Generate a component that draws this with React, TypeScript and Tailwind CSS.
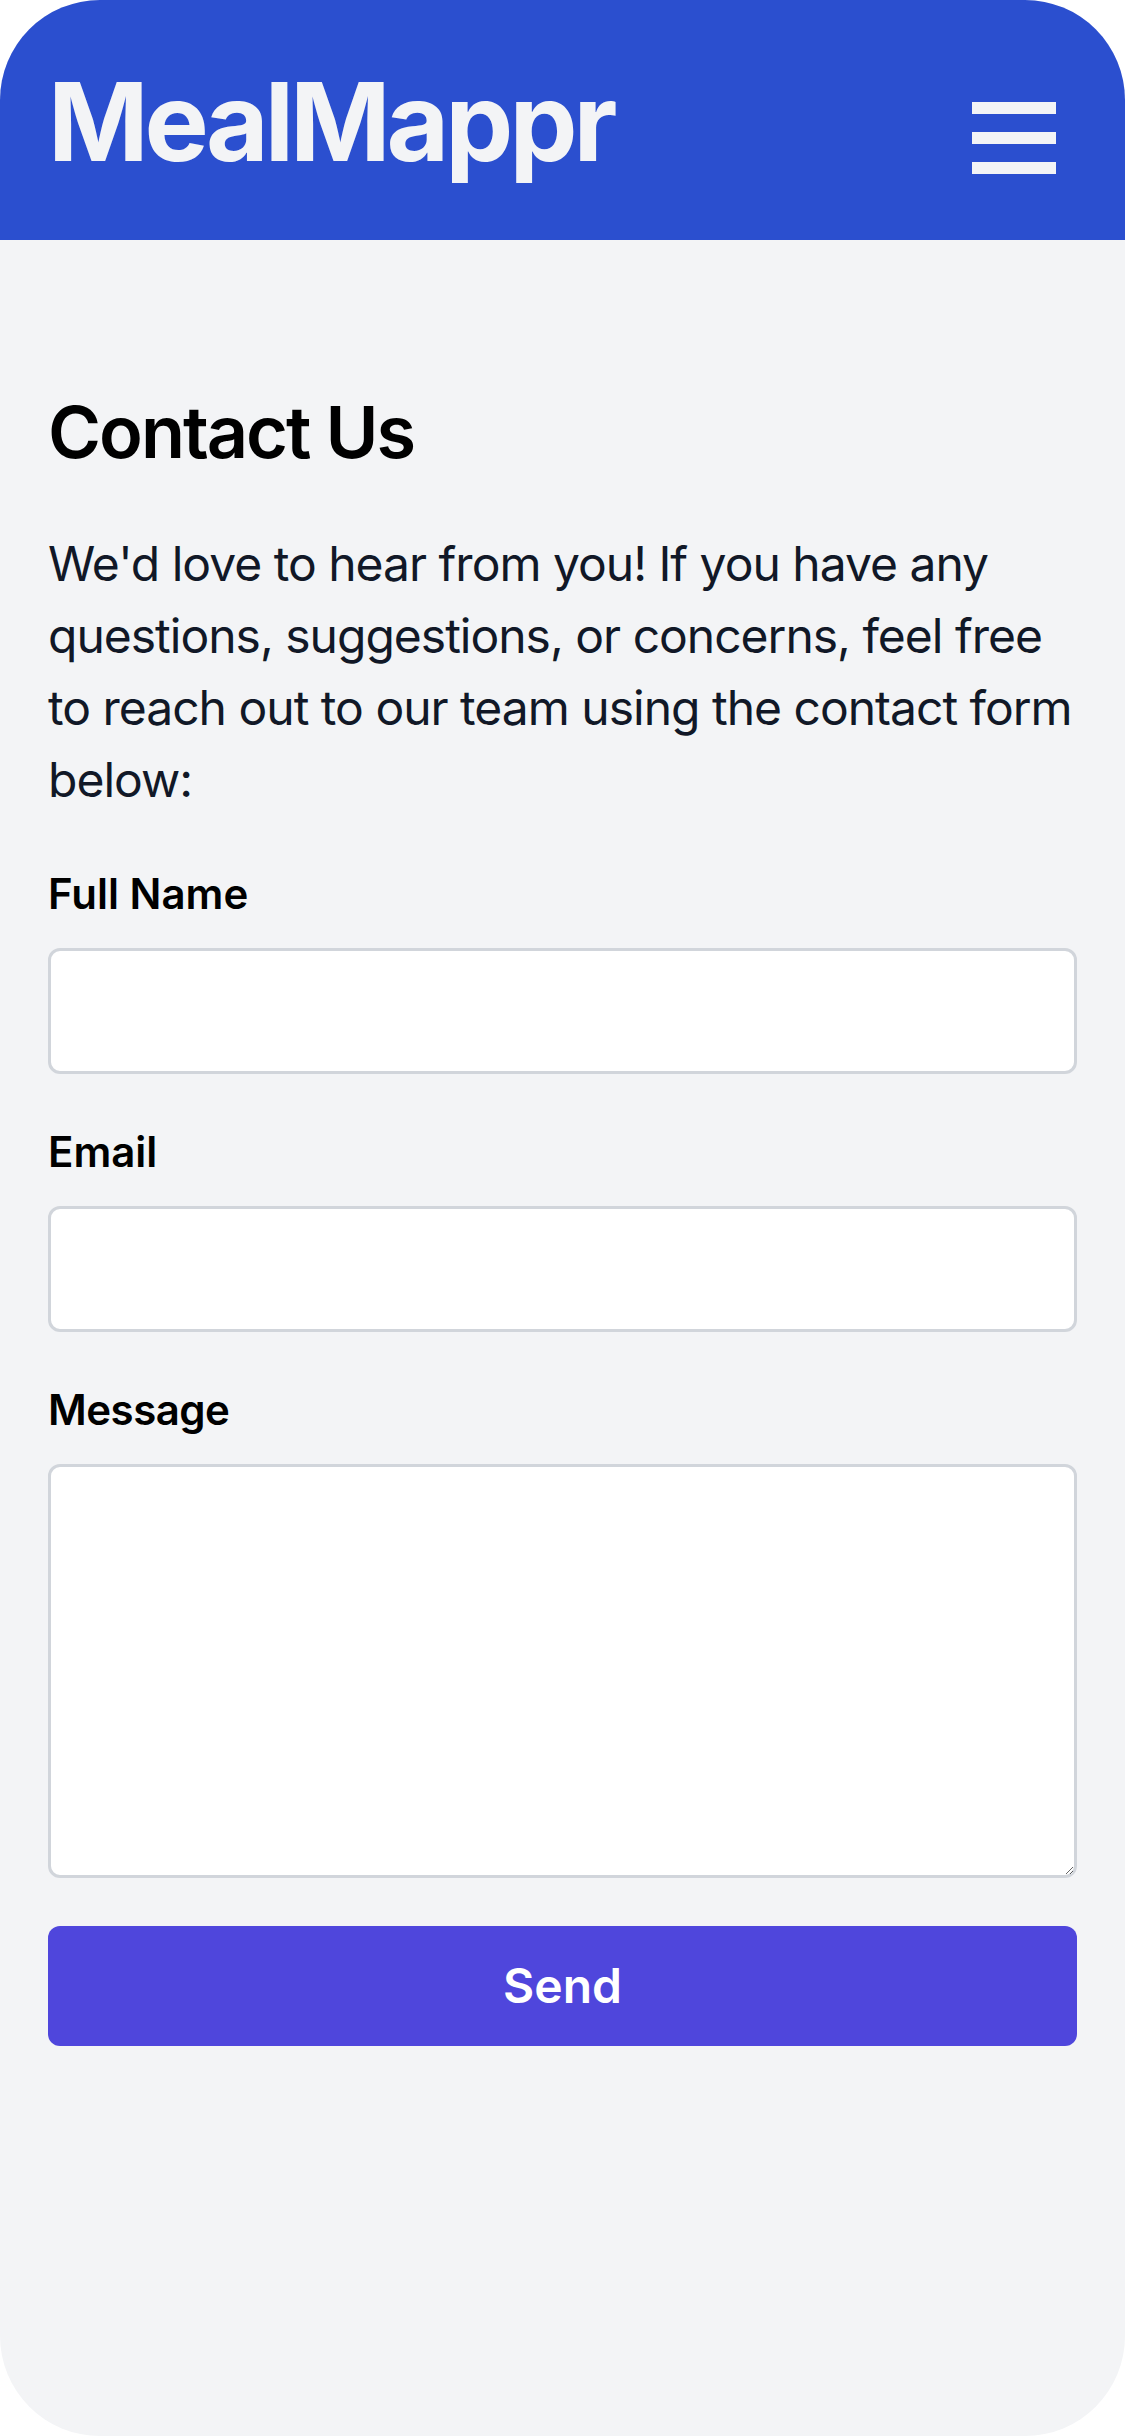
import React from "react";

export default function App() {
  return (
    <div className="bg-white w-[1125px] h-[2436px]" style={{ fontFamily: "Inter, 'Noto Sans', sans-serif" }}>
      <div className="w-full h-full rounded-[100px] overflow-hidden bg-[#f3f4f6] flex flex-col">
        <header className="h-[240px] bg-[#2b4fcf] flex items-center justify-between px-[48px] shrink-0">
          <h1 className="text-[108px] leading-[120px] font-bold text-[#f3f4f6] tracking-[-4px] mt-[4px]">MealMappr</h1>
          <div className="flex flex-col gap-[18px] mt-[36px] mr-[21px]" aria-label="menu">
            <span className="block w-[84px] h-[12px] bg-[#f3f4f6]"></span>
            <span className="block w-[84px] h-[12px] bg-[#f3f4f6]"></span>
            <span className="block w-[84px] h-[12px] bg-[#f3f4f6]"></span>
          </div>
        </header>
        <main className="px-[48px] pt-[144px] flex flex-col">
          <h2 className="text-[72px] leading-[96px] font-semibold text-black mb-[48px] tracking-[-2px]">Contact Us</h2>
          <p className="text-[48px] leading-[72px] text-[#111827] mb-[48px] whitespace-nowrap tracking-[-1px]">
            We'd love to hear from you! If you have any<br />
            questions, suggestions, or concerns, feel free<br />
            to reach out to our team using the contact form<br />
            below:
          </p>
          <form className="flex flex-col">
            <div className="flex flex-col mb-[48px]">
              <label className="text-[42px] leading-[60px] font-semibold text-black mb-[24px]">Full Name</label>
              <input type="text" className="h-[126px] bg-white border-[3px] border-[#d1d5db] rounded-[12px] px-[36px] text-[48px] outline-none" />
            </div>
            <div className="flex flex-col mb-[48px]">
              <label className="text-[42px] leading-[60px] font-semibold text-black mb-[24px]">Email</label>
              <input type="email" className="h-[126px] bg-white border-[3px] border-[#d1d5db] rounded-[12px] px-[36px] text-[48px] outline-none" />
            </div>
            <div className="flex flex-col mb-[48px]">
              <label className="text-[42px] leading-[60px] font-semibold text-black mb-[24px] tracking-[-0.5px]">Message</label>
              <textarea className="h-[414px] bg-white border-[3px] border-[#d1d5db] rounded-[12px] px-[36px] py-[24px] text-[48px] outline-none resize-y"></textarea>
            </div>
            <button type="button" className="h-[120px] w-full bg-[#4f46dc] rounded-[12px] text-white text-[48px] leading-[72px] font-semibold">
              Send
            </button>
          </form>
        </main>
      </div>
    </div>
  );
}
